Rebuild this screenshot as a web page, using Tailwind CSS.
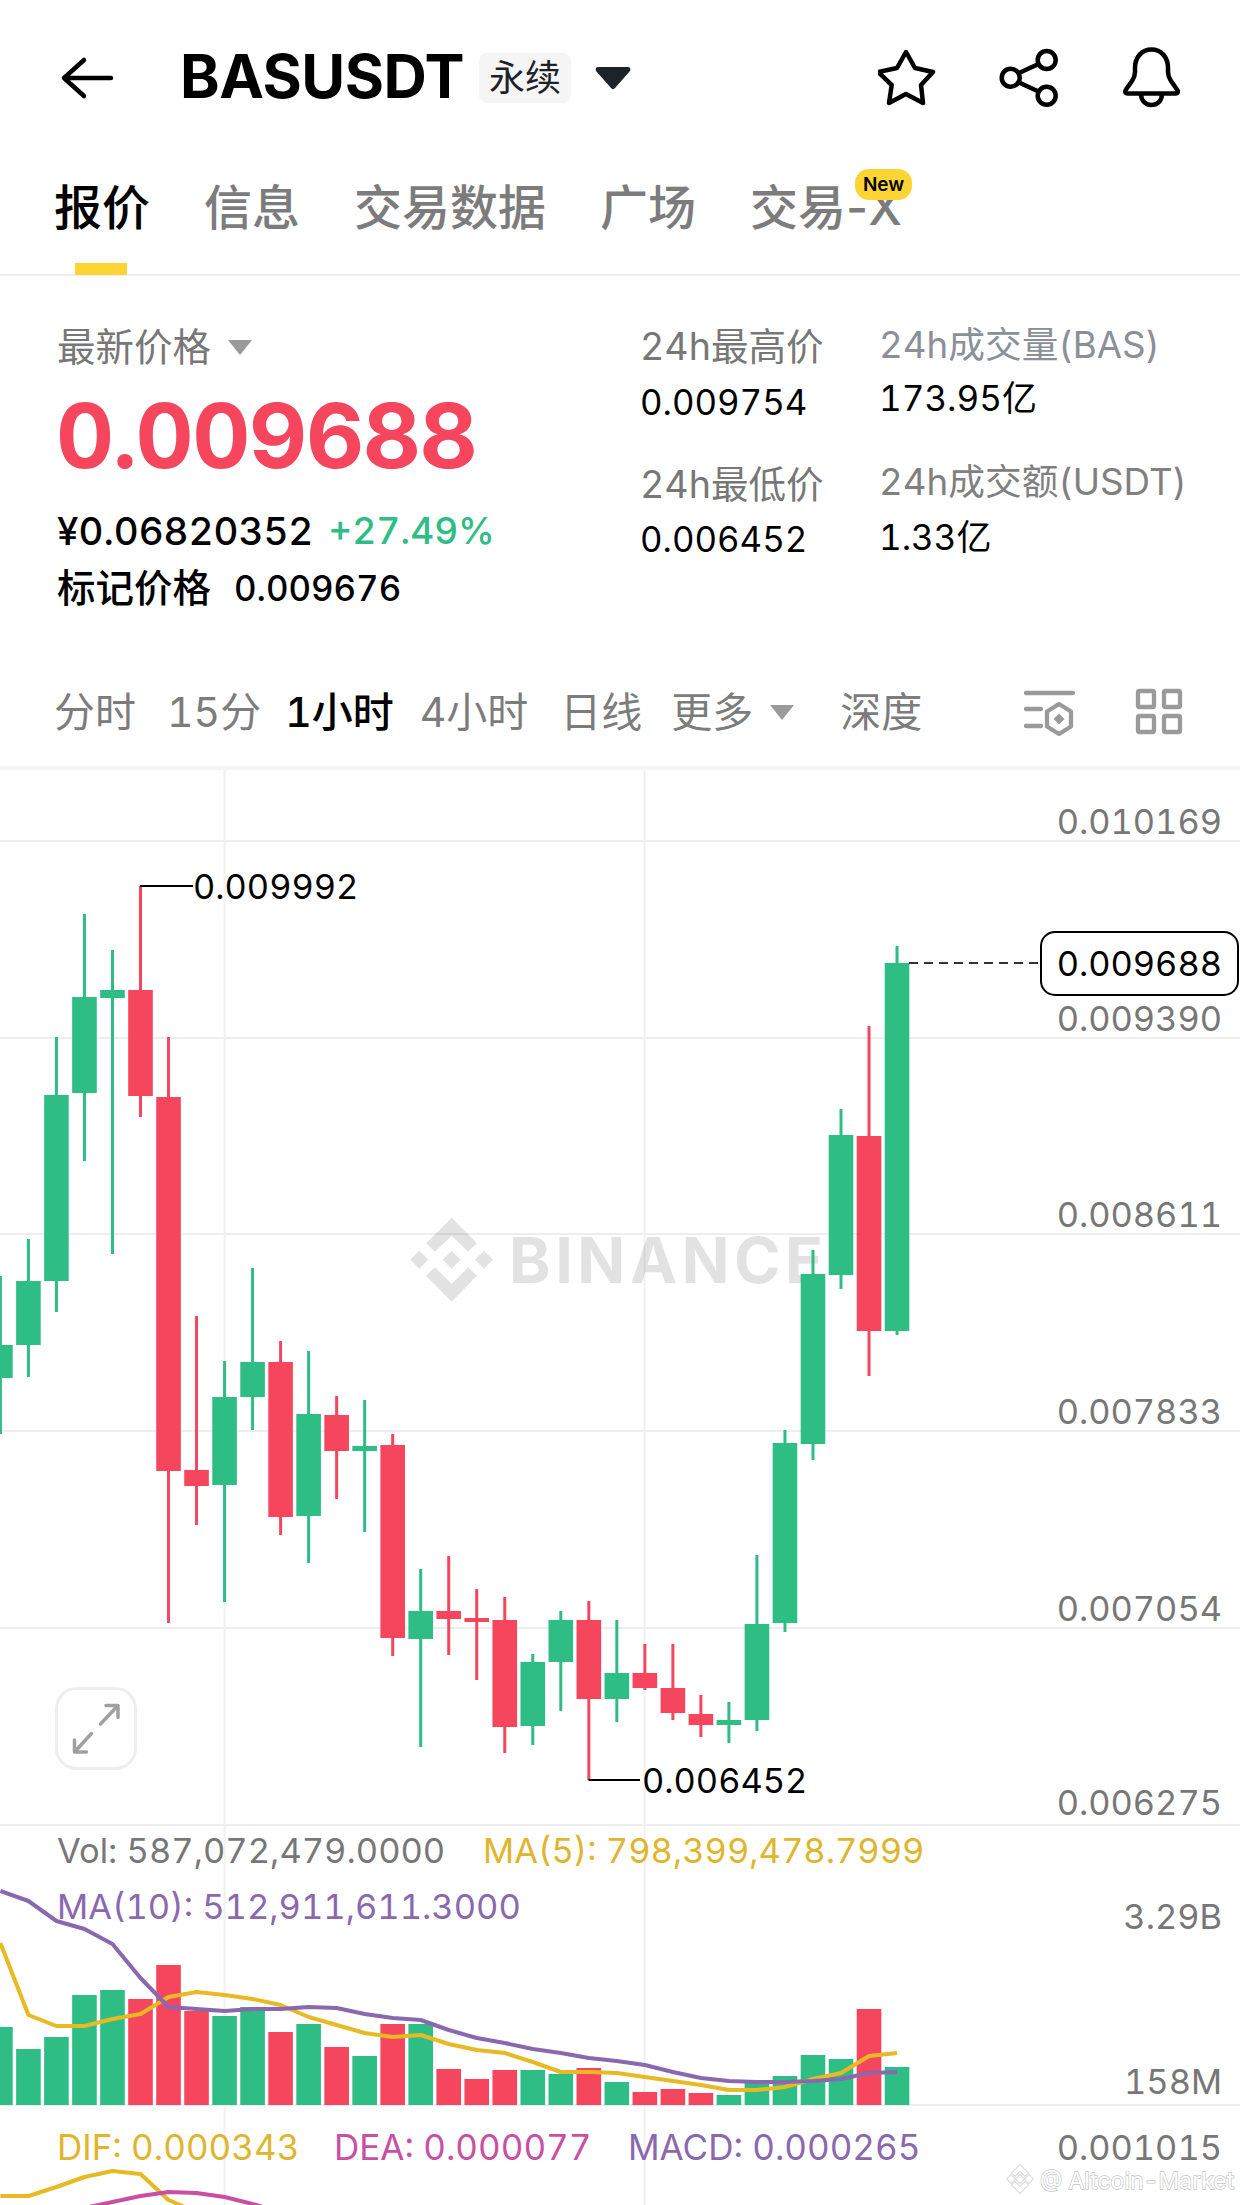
<!DOCTYPE html>
<html lang="zh-CN">
<head>
    <meta charset="UTF-8">
    <meta name="viewport" content="width=device-width, initial-scale=1.0">
    <title>BASUSDT</title>
    <script src="https://cdn.jsdelivr.net/npm/@tailwindcss/browser@4"></script>
</head>
<body class="w-[1240px] h-[2205px] overflow-hidden bg-white text-black tabular-nums font-['Inter','Noto_Sans_CJK_SC',sans-serif]">

    <!-- title bar -->
    <header class="h-[156px] flex items-center">
        <svg class="ml-[60px] w-[56px] h-[44px]" viewBox="60 56 56 44" fill="none" stroke="#000" stroke-width="4.5" stroke-linecap="round" stroke-linejoin="round">
            <path d="M111 78H64M84 60 64 78l20 18"/>
        </svg>
        <h1 class="ml-[64px] pb-[4px] text-[60px] leading-none font-bold tracking-[-0.5px]">BASUSDT</h1>
        <span class="ml-[15px] w-[92px] h-[50px] flex items-center justify-center rounded-lg bg-[#f5f5f5] text-[36px] leading-none text-[#1e2329]">永续</span>
        <svg class="ml-[24px] w-[36px] h-[24px]" viewBox="0 0 36 24"><path d="M3 1h30c2 0 3 2 2 4L20 22c-1 1.500-3 1.500-4 0L1 5C0 3 1 1 3 1z" fill="#1e2329"/></svg>
        <svg class="ml-auto mr-[60px] w-[302px] h-[156px]" viewBox="878 0 302 156" fill="none" stroke="#000" stroke-width="4.5" stroke-linecap="round" stroke-linejoin="round">
            <path d="M906 52l9 16 18 4-12 13 2 18-17-9-17 9 2.700-18L878 72l19-4z"/>
            <circle cx="1046.700" cy="60" r="9"/><circle cx="1010.700" cy="77.700" r="9"/><circle cx="1046.700" cy="95.700" r="9"/>
            <path d="M1019 73l19.500-9M1019 82.500l19.500 9"/>
            <path d="M1128 93.500h47.500c2.500 0 3-2 1.500-4l-6-8.500c-2-3-3-5-3-9v-4c0-11-7-18.500-16.500-18.500S1135 57 1135 68v4c0 4-1 6-3 9l-6 8.500c-1.500 2-1 4 2 4z"/>
            <path d="M1141 94c0 7 5 11 10.500 11s10.500-4 10.500-11"/>
        </svg>
    </header>

    <!-- tabs -->
    <nav class="h-[120px] border-b-2 border-[#eeeeee] flex items-start pl-[54px] pt-[26px] gap-[54px] text-[48px] leading-[52px] font-medium normal-nums text-[#7c7c7c]">
        <a class="relative text-black">报价<span class="absolute left-[21px] top-[81px] w-[52px] h-[12px] bg-[#fcd535]"></span></a>
        <a>信息</a>
        <a>交易数据</a>
        <a>广场</a>
        <a class="relative">交易-X<span class="absolute left-[105px] -top-[13px] w-[57px] h-[31px] rounded-[14px] bg-[#fcd535] flex items-center justify-center text-[19px] leading-none font-semibold text-black">New</span></a>
    </nav>

    <!-- price stats -->
    <section class="h-[388px] flex pl-[57px]">
        <div class="w-[583px]">
            <div class="mt-[49px] flex items-center text-[38.5px] leading-[44px] text-[#777777]">最新价格
                <svg class="ml-[17px] w-[24px] h-[15px]" viewBox="0 0 24 15"><path d="M0 0h24L12 15z" fill="#9a9a9a"/></svg>
            </div>
            <div class="mt-[17px] -ml-[1px] text-[90px] leading-[100px] font-bold tracking-[-1.4px] text-[#f6465d]">0.009688</div>
            <div class="mt-[23px] flex items-center gap-[15px] text-[38.5px] leading-[44px] font-medium">
                <span>¥0.06820352</span><span class="text-[37px] text-[#2ebd85]">+27.49%</span>
            </div>
            <div class="mt-[13px] flex gap-[23px] text-[38.5px] leading-[44px] font-medium items-center">
                <span>标记价格</span><span class="text-[34.8px]">0.009676</span>
            </div>
        </div>
        <div class="w-[239px] text-[37.6px] leading-[44px]">
            <div class="mt-[49px] text-[#777777]">24h最高价</div>
            <div class="mt-[11px] text-[34.8px]">0.009754</div>
            <div class="mt-[39px] text-[#777777]">24h最低价</div>
            <div class="mt-[10px] text-[34.8px]">0.006452</div>
        </div>
        <div class="text-[36.7px] leading-[44px]">
            <div class="mt-[47px] text-[#8a8f98]">24h成交量(BAS)</div>
            <div class="mt-[9px] text-[35px]">173.95亿</div>
            <div class="mt-[40px] text-[#808080]">24h成交额(USDT)</div>
            <div class="mt-[11px] text-[35px]">1.33亿</div>
        </div>
    </section>

    <!-- intervals -->
    <div class="h-[106px] border-b-4 border-[#f5f5f5] flex items-center pl-[54px] pb-[6px] text-[41px] leading-none text-[#7c7c7c]">
        <span>分时</span>
        <span class="ml-[31px]">15分</span>
        <span class="ml-[24px] font-medium text-black">1小时</span>
        <span class="ml-[26px]">4小时</span>
        <span class="ml-[32px]">日线</span>
        <span class="ml-[29px]">更多</span>
        <svg class="ml-[17px] w-[24px] h-[15px]" viewBox="0 0 24 15"><path d="M0 0h24L12 15z" fill="#9a9a9a"/></svg>
        <span class="ml-[46px]">深度</span>
        <svg class="ml-auto mr-[56px] w-[160px] h-[50px]" viewBox="1024 687 160 50" fill="none" stroke="#9a9a9a" stroke-width="4.300" stroke-linecap="round" stroke-linejoin="round">
            <path d="M1026 693h47M1026 709h15M1026 726h15"/>
            <path d="M1059 704l12 7.500v15l-12 7.500-12-7.500v-15z"/>
            <path d="M1059 713.500l5.500 5.500-5.500 5.500-5.500-5.500z" fill="#9a9a9a" stroke="none"/>
            <rect x="1138" y="691" width="16" height="16" rx="1.500"/><rect x="1164" y="691" width="16" height="16" rx="1.500"/>
            <rect x="1138" y="716" width="16" height="16" rx="1.500"/><rect x="1164" y="716" width="16" height="16" rx="1.500"/>
        </svg>
    </div>

    <!-- chart canvas, coordinates are page pixels -->
    <div class="relative h-[1435px] -mt-[4px]">
        <svg id="chart" class="block w-[1240px] h-[1439px]" viewBox="0 766 1240 1439">
            <g id="grid" stroke="#eeeeee" stroke-width="2">
                <path d="M0 841H1240M0 1038H1240M0 1234H1240M0 1431H1240M0 1628H1240M0 1825H1240M0 2105H1240"/>
                <path d="M224.600 770V2205M644.500 770V2205" stroke="#f1f1f1"/>
            </g>
            <!-- binance watermark -->
            <g fill="#000" fill-opacity=".115">
                <path d="M451.700 1217.700 477 1243.300 468 1251.700 451.700 1235.700 435 1251.700 426 1243.300zM451.700 1301.700 477 1275.700 468 1267.300 451.700 1284 435 1267.300 426 1275.700zM451.700 1250.700 460.700 1259.700 451.700 1268.700 442.700 1259.700zM419.300 1250.700 428.300 1259.700 419.300 1268.700 410.300 1259.700zM484 1250.700 493 1259.700 484 1268.700 475 1259.700z"/>
                <text x="509" y="1283" font-size="63" font-weight="700" letter-spacing="4.500">BINANCE</text>
            </g>
            <g id="candles"></g>
            <g id="vols"></g>
            <g id="lines" fill="none" stroke-width="4" stroke-linejoin="round"></g>

            <!-- hi / lo / last markers -->
            <path d="M140 886H193M588.500 1780H640" stroke="#000" stroke-width="2" fill="none"/>
            <path d="M909 963H1040" stroke="#333" stroke-width="2" stroke-dasharray="9 6"/>
            <rect x="1041" y="932" width="197" height="63" rx="14" fill="#fff" stroke="#000" stroke-width="2"/>

            <g font-size="34.400">
                <text x="193" y="899">0.009992</text>
                <text x="642" y="1793">0.006452</text>
                <text x="1222" y="976" text-anchor="end">0.009688</text>
            </g>
            <g font-size="34.400" fill="#777777" text-anchor="end">
                <text x="1222" y="834">0.010169</text>
                <text x="1222" y="1031">0.009390</text>
                <text x="1222" y="1227">0.008611</text>
                <text x="1222" y="1424">0.007833</text>
                <text x="1222" y="1621">0.007054</text>
                <text x="1222" y="1815">0.006275</text>
                <text x="1222" y="1929">3.29B</text>
                <text x="1222" y="2094">158M</text>
                <text x="1222" y="2160">0.001015</text>
            </g>
            <g font-size="34.500">
                <text x="57" y="1863" fill="#777777">Vol: 587,072,479.0000</text>
                <text x="483" y="1863" fill="#e0b52e">MA(5): 798,399,478.7999</text>
                <text x="57" y="1919" fill="#8a68b0">MA(10): 512,911,611.3000</text>
                <text x="57" y="2160" fill="#e0b52e" font-size="35">DIF: 0.000343</text>
                <text x="334" y="2160" fill="#c94fa5" font-size="35">DEA: 0.000077</text>
                <text x="628" y="2160" fill="#8a68b0" font-size="35">MACD: 0.000265</text>
            </g>

            <!-- expand button -->
            <rect x="56.500" y="1688.500" width="79" height="80" rx="20" fill="#fff" fill-opacity=".6" stroke="#eeeeee" stroke-width="3"/>
            <path d="M100.500 1724 118 1705.500M106 1705.500h12v12M91.500 1733.500 74.500 1752M74.500 1740v12h12" fill="none" stroke="#a0a0a0" stroke-width="3.500" stroke-linecap="round" stroke-linejoin="round"/>

            <!-- repost mark -->
            <g fill="#fff" stroke="#c4c4c4" stroke-width="1.300" paint-order="stroke">
                <path d="M1020 2165l8 8-3 3-5-5-5 5-3-3zM1020 2193l8-8-3-3-5 5-5-5-3 3zM1020 2175l4 4-4 4-4-4zM1011 2175l4 4-4 4-4-4zM1029 2175l4 4-4 4-4-4z"/>
                <text x="1040" y="2189" font-size="23">@ Altcoin-Market</text>
            </g>
        </svg>
    </div>

    <script>
        const GREEN = '#2ebd85', RED = '#f6465d';
        const NS = 'http://www.w3.org/2000/svg';
        const cx = i => 0.4 + i * 28.02;

        // [up, wick top, body top, body bottom, wick bottom, volume top]
        const candles = [
            [1, 1276, 1345, 1378, 1434, 2027], [1, 1239, 1281, 1345, 1377, 2049], [1, 1037, 1095, 1281, 1312, 2037],
            [1, 914, 997, 1093, 1161, 1995], [1, 950, 990, 998, 1254, 1990], [0, 886, 990, 1096, 1117, 1999],
            [0, 1037, 1097, 1471, 1623, 1965], [0, 1316, 1470, 1486, 1525, 2011], [1, 1361, 1397, 1485, 1602, 2016],
            [1, 1268, 1362, 1397, 1430, 2007], [0, 1341, 1362, 1517, 1535, 2032], [1, 1351, 1414, 1516, 1563, 2024],
            [0, 1396, 1415, 1451, 1499, 2047], [1, 1400, 1446, 1451, 1532, 2056], [0, 1434, 1445, 1638, 1656, 2024],
            [1, 1569, 1611, 1639, 1747, 2024], [0, 1556, 1611, 1619, 1655, 2069], [0, 1589, 1618, 1622, 1680, 2079],
            [0, 1597, 1620, 1727, 1753, 2070], [1, 1654, 1662, 1726, 1745, 2070], [1, 1611, 1620, 1662, 1711, 2074],
            [0, 1601, 1620, 1699, 1780, 2068], [1, 1620, 1673, 1699, 1722, 2082], [0, 1644, 1673, 1688, 1690, 2092],
            [0, 1644, 1688, 1713, 1720, 2089], [0, 1695, 1714, 1725, 1737, 2093], [1, 1702, 1720, 1725, 1743, 2095],
            [1, 1555, 1624, 1720, 1731, 2082], [1, 1430, 1443, 1623, 1632, 2076], [1, 1250, 1274, 1444, 1460, 2055],
            [1, 1109, 1135, 1275, 1289, 2059], [0, 1026, 1136, 1331, 1376, 2009], [1, 946, 963, 1331, 1335, 2067]
        ];

        const ma5 = [1943, 2015, 2026, 2026, 2019, 2014, 1997, 1992, 1995, 1999, 2005, 2017, 2025, 2033, 2037, 2035, 2044, 2050, 2053, 2062, 2072, 2072, 2073, 2077, 2081, 2085, 2090, 2090, 2087, 2079, 2073, 2056, 2053];
        const ma10 = [1891, 1901, 1921, 1929, 1944, 1978, 2007, 2009, 2011, 2009, 2009, 2007, 2008, 2014, 2018, 2020, 2030, 2038, 2043, 2049, 2053, 2058, 2061, 2065, 2072, 2078, 2081, 2082, 2082, 2081, 2079, 2073, 2072];
        const dif = [2196, 2196, 2187, 2177, 2171, 2174, 2200, 2212];
        const dea = [2212, 2208, 2202, 2196, 2192, 2193, 2197, 2204, 2212];

        function add(parent, tag, attrs) {
            const el = document.createElementNS(NS, tag);
            for (const k in attrs) el.setAttribute(k, attrs[k]);
            document.getElementById(parent).appendChild(el);
        }

        candles.forEach((c, i) => {
            const fill = c[0] ? GREEN : RED, x = cx(i);
            add('candles', 'rect', { x: x - 1.5, y: c[1], width: 3, height: c[4] - c[1], fill });
            add('candles', 'rect', { x: x - 12.3, y: c[2], width: 24.6, height: c[3] - c[2], fill });
            add('vols', 'rect', { x: x - 12.3, y: c[5], width: 24.6, height: 2105 - c[5], fill });
        });

        const pts = (ys, start) => ys.map((y, i) => cx(i + start) + ',' + y).join(' ');
        add('lines', 'polyline', { points: pts(ma5, 0), stroke: '#e8b923' });
        add('lines', 'polyline', { points: pts(ma10, 0), stroke: '#8a68b0' });
        add('lines', 'polyline', { points: pts(dif, 0), stroke: '#e8b923' });
        add('lines', 'polyline', { points: pts(dea, 2), stroke: '#c94fa5' });
    </script>
</body>
</html>
